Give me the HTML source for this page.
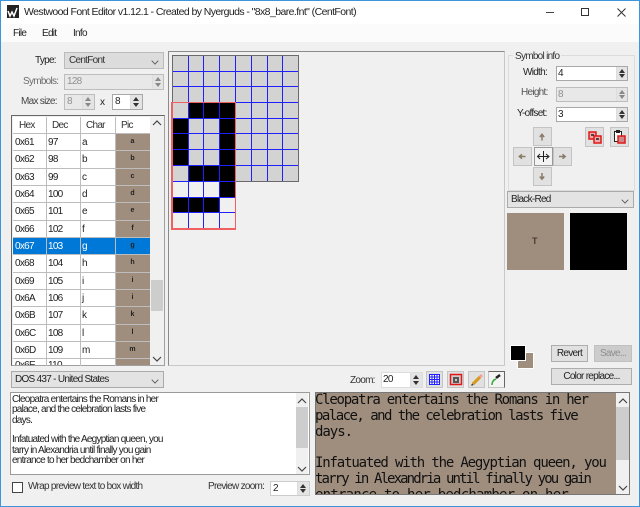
<!DOCTYPE html>
<html><head><meta charset="utf-8">
<style>
html,body{margin:0;padding:0}
body{width:640px;height:507px;overflow:hidden;background:#f0f0f0;position:relative;font-family:"Liberation Sans",sans-serif;font-size:10px;letter-spacing:-.72px;color:#222}
div,span{position:absolute;box-sizing:border-box;white-space:nowrap}
.t{line-height:13px}
.g{color:#6d6d6d}
.box{border:1px solid #a8a8a8;background:#fff}
.dis{background:#e8e8e8;color:#909090;border-color:#bdbdbd}
.btn{background:#e1e1e1;border:1px solid #adadad;text-align:center;line-height:15px}
.sb{background:#e4e4e4;border-left:1px solid #ddd;width:11px;top:0;bottom:0;right:0}
.sb:before{content:"";position:absolute;left:2px;top:2px;border:3px solid transparent;border-top:0;border-bottom:4px solid #333}
.sb:after{content:"";position:absolute;left:2px;bottom:2px;border:3px solid transparent;border-bottom:0;border-top:4px solid #333}
.dis .sb:before{border-bottom-color:#888}.dis .sb:after{border-top-color:#888}
.dd{background:#e3e3e3;border:1px solid #aaa;padding-left:5px;line-height:15px}
.dd:after{content:"";position:absolute;right:5px;top:5px;width:5px;height:5px;border-right:1px solid #555;border-bottom:1px solid #555;transform:rotate(45deg) scale(.85)}
.row{left:13px;width:137px;height:17px;background:#fff}
.row span{top:2px;line-height:13px}
.row .a{left:2px}.row .b{left:35px}.row .c{left:69px}
.row .p{left:102px;top:0;width:35px;height:17px;background:#9f8e7e;text-align:center;font-size:7px;font-weight:bold;line-height:16px;color:#222;letter-spacing:0}
.sel{background:#0078d7;color:#fff}
.hl{background:#bdbdbd;top:117px;width:1px;height:249px}
.h{background:#bdbdbd;left:13px;width:137px;height:1px}
.sq{background:#e1e1e1;border:1px solid #c4c4c4}
.pv{left:-1px;font-family:'DejaVu Sans Mono','Liberation Mono',monospace;font-size:14px;line-height:16px;color:#111}
.ta{left:12px;line-height:10px;color:#222;letter-spacing:-.75px}
</style></head>
<body>
<!-- window frame -->
<div style="left:0;top:0;width:640px;height:507px;border:1px solid #3f95dc"></div>
<div style="left:1px;top:1px;width:638px;height:23px;background:#fff"></div>
<div style="left:1px;top:24px;width:638px;height:18px;background:#fbfbfb"></div>
<!-- title -->
<svg style="position:absolute;left:7px;top:5px" width="12" height="13"><rect width="12" height="13" fill="#222"/><path d="M1 6l2 5 2-4 2 4 3-8" stroke="#fff" stroke-width="1.500" fill="none"/></svg>
<div class="t" style="left:24px;top:6px;font-size:10.5px;letter-spacing:-.58px;color:#222">Westwood Font Editor v1.12.1 - Created by Nyerguds - "8x8_bare.fnt" (CentFont)</div>
<div style="left:546px;top:12px;width:8px;height:1px;background:#444"></div>
<div style="left:581px;top:8px;width:8px;height:8px;border:1px solid #333"></div>
<svg style="position:absolute;left:616px;top:7px" width="11" height="11"><path d="M1.500 1.500l8 8M9.500 1.500l-8 8" stroke="#333" stroke-width="1"/></svg>
<!-- menu -->
<div class="t" style="left:13px;top:27px">File</div>
<div class="t" style="left:42px;top:27px">Edit</div>
<div class="t" style="left:73px;top:27px">Info</div>
<!-- left controls -->
<div class="t" style="left:35px;top:54px">Type:</div>
<div class="dd" style="left:64px;top:52px;width:100px;height:17px;background:#dcdcdc;padding-left:4px;border-color:#bbb"><span style="left:4px;top:1px;line-height:13px;color:#333">CentFont</span></div>
<div class="t g" style="left:23px;top:75px">Symbols:</div>
<div class="box dis" style="left:64px;top:74px;width:100px;height:16px;padding-left:2px;line-height:14px">128<div class="sb"></div></div>
<div class="t" style="left:21px;top:95px;color:#444">Max size:</div>
<div class="box dis" style="left:64px;top:94px;width:31px;height:16px;padding-left:2px;line-height:14px">8<div class="sb" style="width:12px"></div></div>
<div class="t" style="left:100px;top:96px">x</div>
<div class="box" style="left:112px;top:94px;width:31px;height:16px;padding-left:2px;line-height:14px">8<div class="sb" style="width:12px"></div></div>
<!-- table -->
<div style="left:11px;top:115px;width:154px;height:251px;border:1px solid #666;border-right-color:#a0a0a0;border-bottom-color:#a0a0a0;background:#f0f0f0;overflow:hidden"></div>
<div style="left:13px;top:117px;width:137px;height:17px;background:#fff"></div>
<div class="t" style="left:19px;top:119px;color:#333">Hex</div>
<div class="t" style="left:52px;top:119px;color:#333">Dec</div>
<div class="t" style="left:86px;top:119px;color:#333">Char</div>
<div class="t" style="left:121px;top:119px;color:#333">Pic</div>
<div class="row" style="top:134px"><span class="a">0x61</span><span class="b">97</span><span class="c">a</span><span class="p">a</span></div>
<div class="row" style="top:151px"><span class="a">0x62</span><span class="b">98</span><span class="c">b</span><span class="p">b</span></div>
<div class="row" style="top:169px"><span class="a">0x63</span><span class="b">99</span><span class="c">c</span><span class="p">c</span></div>
<div class="row" style="top:186px"><span class="a">0x64</span><span class="b">100</span><span class="c">d</span><span class="p">d</span></div>
<div class="row" style="top:203px"><span class="a">0x65</span><span class="b">101</span><span class="c">e</span><span class="p">e</span></div>
<div class="row" style="top:221px"><span class="a">0x66</span><span class="b">102</span><span class="c">f</span><span class="p">f</span></div>
<div class="row sel" style="top:238px"><span class="a">0x67</span><span class="b">103</span><span class="c">g</span><span class="p" style="background:#0078d7;color:#222">g</span></div>
<div class="row" style="top:255px"><span class="a">0x68</span><span class="b">104</span><span class="c">h</span><span class="p">h</span></div>
<div class="row" style="top:273px"><span class="a">0x69</span><span class="b">105</span><span class="c">i</span><span class="p">i</span></div>
<div class="row" style="top:290px"><span class="a">0x6A</span><span class="b">106</span><span class="c">j</span><span class="p">i</span></div>
<div class="row" style="top:307px"><span class="a">0x6B</span><span class="b">107</span><span class="c">k</span><span class="p">k</span></div>
<div class="row" style="top:325px"><span class="a">0x6C</span><span class="b">108</span><span class="c">l</span><span class="p">l</span></div>
<div class="row" style="top:342px"><span class="a">0x6D</span><span class="b">109</span><span class="c">m</span><span class="p">m</span></div>
<div style="left:13px;top:359px;width:137px;height:6px;background:#fff;overflow:hidden"><span style="left:2px;top:0;line-height:13px">0x6E</span><span style="left:35px;top:0;line-height:13px">110</span><span style="left:102px;top:0;width:35px;height:6px;background:#9f8e7e"></span></div>
<div class="h" style="top:133px"></div><div class="h" style="top:150px"></div><div class="h" style="top:168px"></div><div class="h" style="top:185px"></div><div class="h" style="top:202px"></div><div class="h" style="top:220px"></div><div class="h" style="top:237px"></div><div class="h" style="top:254px"></div><div class="h" style="top:272px"></div><div class="h" style="top:289px"></div><div class="h" style="top:306px"></div><div class="h" style="top:324px"></div><div class="h" style="top:341px"></div><div class="h" style="top:358px"></div>
<div class="hl" style="left:46px"></div><div class="hl" style="left:80px"></div><div class="hl" style="left:115px"></div>
<div style="left:150px;top:116px;width:14px;height:249px;background:#f0f0f0"></div>
<div style="left:151px;top:280px;width:12px;height:31px;background:#cdcdcd"></div>
<svg style="position:absolute;left:152px;top:120px" width="10" height="6"><path d="M1 5l4-4 4 4" stroke="#444" stroke-width="1.200" fill="none"/></svg>
<svg style="position:absolute;left:152px;top:356px" width="10" height="6"><path d="M1 1l4 4 4-4" stroke="#444" stroke-width="1.200" fill="none"/></svg>
<!-- encoding -->
<div class="dd" style="left:11px;top:371px;width:153px;height:17px"><span style="left:3px;top:1px;line-height:13px">DOS 437 - United States</span></div>
<!-- editor panel -->
<div style="left:168px;top:51px;width:337px;height:315px;border:1px solid #8a8a8a;border-right-color:#c8c8c8;border-bottom-color:#c8c8c8;background:#f0f0f0"></div>
<svg style="position:absolute;left:170px;top:53px" width="132" height="180" shape-rendering="crispEdges">
<rect x="2" y="2" width="126" height="126" fill="#d3d3d3"/>
<rect x="2" y="128" width="63" height="47" fill="#f0f0f0"/>
<g fill="#000">
<rect x="18" y="49" width="47" height="16"/>
<rect x="2" y="65" width="16" height="47"/>
<rect x="49" y="65" width="16" height="47"/>
<rect x="18" y="112" width="47" height="16"/>
<rect x="49" y="128" width="16" height="16"/>
<rect x="2" y="144" width="47" height="15"/>
</g>
<g fill="#1f1fff">
<rect x="18" y="2" width="1" height="173"/><rect x="33" y="2" width="1" height="173"/><rect x="49" y="2" width="1" height="173"/><rect x="65" y="2" width="1" height="126"/><rect x="81" y="2" width="1" height="126"/><rect x="97" y="2" width="1" height="126"/><rect x="112" y="2" width="1" height="126"/>
<rect x="2" y="18" width="126" height="1"/><rect x="2" y="33" width="126" height="1"/><rect x="2" y="49" width="126" height="1"/><rect x="2" y="65" width="126" height="1"/><rect x="2" y="80" width="126" height="1"/><rect x="2" y="96" width="126" height="1"/><rect x="2" y="112" width="126" height="1"/><rect x="2" y="128" width="63" height="1"/><rect x="2" y="144" width="63" height="1"/><rect x="2" y="159" width="63" height="1"/>
</g>
<g fill="#6a6a6a">
<rect x="2" y="2" width="126" height="1"/><rect x="2" y="2" width="1" height="47"/><rect x="128" y="2" width="1" height="127"/><rect x="65" y="128" width="64" height="1"/>
</g>
<g fill="#f06060">
<rect x="2" y="49" width="64" height="1"/><rect x="1" y="49" width="2" height="127"/><rect x="65" y="49" width="1" height="127"/><rect x="1" y="175" width="65" height="2"/>
</g>
</svg>
<!-- symbol info -->
<div style="left:508px;top:55px;width:127px;height:136px;border:1px solid #dcdcdc"></div>
<div class="t" style="left:513px;top:50px;background:#f0f0f0;padding:0 2px;color:#333">Symbol info</div>
<div class="t" style="left:523px;top:66px">Width:</div>
<div class="t g" style="left:521px;top:86px;color:#555">Height:</div>
<div class="t" style="left:517px;top:107px">Y-offset:</div>
<div class="box" style="left:556px;top:66px;width:72px;height:15px;padding-left:1px;line-height:13px">4<div class="sb"></div></div>
<div class="box dis" style="left:556px;top:87px;width:72px;height:15px;padding-left:1px;line-height:13px">8<div class="sb"></div></div>
<div class="box" style="left:556px;top:107px;width:72px;height:15px;padding-left:1px;line-height:13px">3<div class="sb"></div></div>
<!-- arrows -->
<div class="sq" style="left:533px;top:127px;width:19px;height:19px"></div>
<div class="sq" style="left:513px;top:147px;width:19px;height:19px"></div>
<div class="sq" style="left:534px;top:147px;width:19px;height:19px;background:#f3f3f3;border-color:#999"></div>
<div class="sq" style="left:553px;top:147px;width:19px;height:19px"></div>
<div class="sq" style="left:533px;top:167px;width:19px;height:19px"></div>
<svg style="position:absolute;left:513px;top:127px" width="60" height="60">
<path d="M29 13.500v-6M26.800 10l2.200-2.700 2.200 2.700" stroke="#8a7a68" stroke-width="1.500" fill="none"/>
<path d="M6.500 29.500h6M9 27.300l-2.700 2.200 2.700 2.200" stroke="#8a7a68" stroke-width="1.500" fill="none"/>
<path d="M46 29.500h6M49.500 27.300l2.700 2.200-2.700 2.200" stroke="#8a7a68" stroke-width="1.500" fill="none"/>
<path d="M29 46v6M26.800 49.500l2.200 2.700 2.200-2.700" stroke="#8a7a68" stroke-width="1.500" fill="none"/>
<path d="M30.500 24v11M25 29.500h11M27 27l-2.500 2.500 2.500 2.500M33 27l3 2.500-3 2.500" stroke="#222" stroke-width="1" fill="none"/>
</svg>
<div class="sq" style="left:585px;top:127px;width:19px;height:20px"></div>
<div class="sq" style="left:610px;top:127px;width:19px;height:20px"></div>
<svg style="position:absolute;left:585px;top:127px" width="44" height="20">
<rect x="4" y="5" width="7" height="7" fill="#eaa" stroke="#e01818" stroke-width="1.500"/><rect x="9" y="9" width="7" height="7" fill="#eaa" stroke="#e01818" stroke-width="1.500"/>
<path d="M6 8h3M11 12h3" stroke="#222" stroke-width="1.500"/>
<rect x="29.500" y="4.500" width="7" height="10" fill="#fff" stroke="#222"/><rect x="31" y="3" width="4" height="3" fill="#222"/>
<rect x="33" y="9" width="7" height="7" fill="#c88" stroke="#e01818" stroke-width="1.500"/>
</svg>
<!-- palette -->
<div class="dd" style="left:507px;top:191px;width:127px;height:17px"><span style="left:3px;top:1px;line-height:13px">Black-Red</span></div>
<div style="left:507px;top:213px;width:57px;height:57px;background:#9f8e7e"></div>
<div class="t" style="left:532px;top:235px;font-size:9px;font-weight:bold;color:#4a3a35;letter-spacing:0">T</div>
<div style="left:570px;top:213px;width:57px;height:57px;background:#000"></div>
<div style="left:517px;top:352px;width:17px;height:17px;background:#9f8e7e;border:1px solid #fff"></div>
<div style="left:510px;top:345px;width:16px;height:16px;background:#000;border:1px solid #fff"></div>
<div class="btn" style="left:551px;top:345px;width:37px;height:17px">Revert</div>
<div class="btn" style="left:594px;top:345px;width:38px;height:17px;background:#ccc;border-color:#c0c0c0;color:#8e8e8e">Save...</div>
<div class="btn" style="left:551px;top:368px;width:81px;height:17px">Color replace...</div>
<!-- zoom row -->
<div class="t" style="left:350px;top:374px;color:#333">Zoom:</div>
<div class="box" style="left:381px;top:372px;width:42px;height:16px;padding-left:1px;line-height:14px;border-color:#ddd">20<div class="sb" style="width:12px"></div></div>
<div class="sq" style="left:426px;top:371px;width:17px;height:17px"></div>
<div class="sq" style="left:447px;top:371px;width:17px;height:17px"></div>
<div class="sq" style="left:468px;top:371px;width:17px;height:17px"></div>
<div class="sq" style="left:488px;top:371px;width:17px;height:17px;background:#f3f3f3;border-right-color:#666;border-top-color:#666"></div>
<svg style="position:absolute;left:426px;top:371px" width="80" height="18">
<rect x="3.500" y="3.500" width="10" height="10" fill="#fff" stroke="#1f1fff"/><path d="M6 3v11M8.500 3v11M11 3v11M3 6h11M3 8.500h11M3 11h11" stroke="#1f1fff"/>
<rect x="24.500" y="3.500" width="11" height="10" fill="#ccc" stroke="#e01818" stroke-width="1.500"/><rect x="27" y="6" width="6" height="6" fill="#555"/><rect x="29" y="8" width="2" height="2" fill="#ccc"/>
<path d="M47 13l7-7" stroke="#d89a20" stroke-width="3.200"/><path d="M54 6l2-2" stroke="#f0a0a0" stroke-width="3"/><path d="M45.500 14.500l1.500-1.500" stroke="#444" stroke-width="1.500"/>
<path d="M66 14c0-3 1-5 4-6" stroke="#30a840" stroke-width="1.500" fill="none"/><path d="M70 7l4-3" stroke="#222" stroke-width="2.500"/>
</svg>
<!-- text area -->
<div class="box" style="left:10px;top:392px;width:300px;height:83px;border-color:#9a9a9a"></div>
<div class="ta" style="top:395px">Cleopatra entertains the Romans in her</div>
<div class="ta" style="top:405px">palace, and the celebration lasts five</div>
<div class="ta" style="top:416px">days.</div>
<div class="ta" style="top:435px">Infatuated with the Aegyptian queen, you</div>
<div class="ta" style="top:446px">tarry in Alexandria until finally you gain</div>
<div class="ta" style="top:456px">entrance to her bedchamber on her</div>
<div style="left:296px;top:393px;width:12px;height:81px;background:#f0f0f0"></div>
<div style="left:296px;top:407px;width:12px;height:41px;background:#cdcdcd"></div>
<svg style="position:absolute;left:297px;top:398px" width="10" height="6"><path d="M1 5l4-4 4 4" stroke="#444" stroke-width="1.200" fill="none"/></svg>
<svg style="position:absolute;left:297px;top:466px" width="10" height="6"><path d="M1 1l4 4 4-4" stroke="#444" stroke-width="1.200" fill="none"/></svg>
<!-- preview -->
<div style="left:315px;top:392px;width:315px;height:103px;background:#9f8e7e;border:1px solid #777;overflow:hidden">
<div class="pv" style="top:-1px;letter-spacing:-1.25px">Cleopatra entertains the Romans in her</div>
<div class="pv" style="top:15px;letter-spacing:-1.53px">palace, and the celebration lasts five</div>
<div class="pv" style="top:31px;letter-spacing:-1.03px">days.</div>
<div class="pv" style="top:62px;letter-spacing:-1.16px">Infatuated with the Aegyptian queen, you</div>
<div class="pv" style="top:78px;letter-spacing:-1.88px">tarry in Alexandria until finally you gain</div>
<div class="pv" style="top:94px;letter-spacing:-.76px">entrance to her bedchamber on her</div>
<div style="left:300px;top:0;width:13px;height:101px;background:#f0f0f0"></div>
<div style="left:300px;top:14px;width:13px;height:53px;background:#cdcdcd"></div>
<svg style="position:absolute;left:302px;top:5px" width="10" height="6"><path d="M1 5l4-4 4 4" stroke="#444" stroke-width="1.200" fill="none"/></svg>
<svg style="position:absolute;left:302px;top:92px" width="10" height="6"><path d="M1 1l4 4 4-4" stroke="#444" stroke-width="1.200" fill="none"/></svg>
</div>
<!-- bottom -->
<div style="left:12px;top:482px;width:11px;height:11px;border:1px solid #444;background:#fff"></div>
<div class="t" style="left:28px;top:480px;color:#333">Wrap preview text to box width</div>
<div class="t" style="left:208px;top:480px;color:#333">Preview zoom:</div>
<div class="box" style="left:270px;top:481px;width:40px;height:15px;padding-left:2px;line-height:13px;border-color:#ccc">2<div class="sb" style="width:12px"></div></div>
</body></html>
